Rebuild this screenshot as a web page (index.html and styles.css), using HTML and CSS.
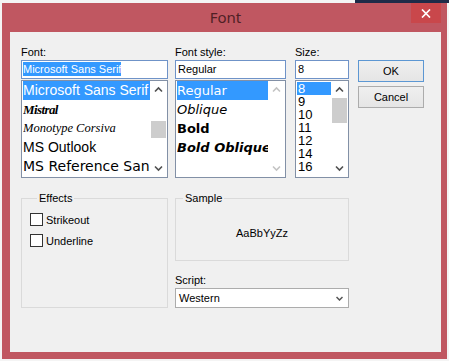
FILE: index.html
```html
<!DOCTYPE html>
<html lang="en">
<head>
<meta charset="utf-8">
<title>Font</title>
<link rel="stylesheet" href="styles.css">
</head>
<body>
<div class="desk-strip"></div>
<div class="window">
  <div class="titlebar">
    <span class="title">Font</span>
    <button class="close" aria-label="Close">
      <svg width="10" height="9" viewBox="0 0 10 9"><path d="M1 0.5 L9 8.5 M9 0.5 L1 8.5" stroke="#fff" stroke-width="1.7" fill="none"/></svg>
    </button>
  </div>
  <div class="client">
    <div class="top">
      <div class="col col-font">
        <div class="label">Font:</div>
        <div class="input"><span class="sel">Microsoft Sans Serif</span></div>
        <div class="list">
          <div class="items">
            <div class="row f-mss selected">Microsoft Sans Serif</div>
            <div class="row f-mistral">Mistral</div>
            <div class="row f-corsiva">Monotype Corsiva</div>
            <div class="row f-outlook">MS Outlook</div>
            <div class="row f-ref">MS Reference Sans Serif</div>
          </div>
          <div class="scrollbar">
            <div class="sb-btn"><svg width="17" height="17" viewBox="0 0 17 17"><path d="M5 10.5 L8.5 7 L12 10.5" class="chev"/></svg></div>
            <div class="sb-track"><div class="thumb thumb-font"></div></div>
            <div class="sb-btn"><svg width="17" height="17" viewBox="0 0 17 17"><path d="M5 6.5 L8.5 10 L12 6.5" class="chev"/></svg></div>
          </div>
        </div>
      </div>
      <div class="col col-style">
        <div class="label">Font style:</div>
        <div class="input"><span class="val">Regular</span></div>
        <div class="list">
          <div class="items style-items">
            <div class="row selected">Regular</div>
            <div class="row s-italic">Oblique</div>
            <div class="row s-bold">Bold</div>
            <div class="row s-bolditalic">Bold Oblique</div>
          </div>
          <div class="scrollbar disabled">
            <div class="sb-btn"><svg width="17" height="17" viewBox="0 0 17 17"><path d="M5 10.5 L8.5 7 L12 10.5" class="chev"/></svg></div>
            <div class="sb-track"></div>
            <div class="sb-btn"><svg width="17" height="17" viewBox="0 0 17 17"><path d="M5 6.5 L8.5 10 L12 6.5" class="chev"/></svg></div>
          </div>
        </div>
      </div>
      <div class="col col-size">
        <div class="label">Size:</div>
        <div class="input"><span class="val">8</span></div>
        <div class="list">
          <div class="items size-items">
            <div class="row selected">8</div>
            <div class="row">9</div>
            <div class="row">10</div>
            <div class="row">11</div>
            <div class="row">12</div>
            <div class="row">14</div>
            <div class="row">16</div>
          </div>
          <div class="scrollbar">
            <div class="sb-btn"><svg width="17" height="17" viewBox="0 0 17 17"><path d="M5 10.5 L8.5 7 L12 10.5" class="chev"/></svg></div>
            <div class="sb-track"><div class="thumb thumb-size"></div></div>
            <div class="sb-btn"><svg width="17" height="17" viewBox="0 0 17 17"><path d="M5 6.5 L8.5 10 L12 6.5" class="chev"/></svg></div>
          </div>
        </div>
      </div>
      <div class="buttons">
        <button class="btn default">OK</button>
        <button class="btn">Cancel</button>
      </div>
    </div>
    <div class="bottom">
      <div class="group effects" role="group">
        <div class="group-title">Effects</div>
        <label class="check"><span class="box"></span><span class="check-text">Strikeout</span></label>
        <label class="check"><span class="box"></span><span class="check-text">Underline</span></label>
      </div>
      <div class="right">
        <div class="group sample" role="group">
          <div class="group-title">Sample</div>
          <div class="sample-text">AaBbYyZz</div>
        </div>
        <div class="label script-label">Script:</div>
        <div class="select">
          <span>Western</span>
          <svg width="7" height="5" viewBox="0 0 7 5"><path d="M0.5 1 L3.5 4 L6.5 1" stroke="#555" stroke-width="1.5" fill="none"/></svg>
        </div>
      </div>
    </div>
  </div>
</div>
</body>
</html>
```

FILE: styles.css
```css
* { box-sizing: border-box; }

html, body {
  margin: 0;
}

body {
  width: 449px;
  height: 361px;
  padding: 3px 0 0 2px;
  background: #f4f4f4;
  font-family: "Liberation Sans", Arial, sans-serif;
  font-size: 11px;
  color: #000;
  position: relative;
  overflow: hidden;
}

.desk-strip {
  position: absolute;
  top: 0;
  left: 355px;
  width: 94px;
  height: 3px;
  background: #1e2b48;
}

.window {
  width: 445px;
  height: 356px;
  background: #c05761;
  display: flex;
  flex-direction: column;
  padding: 0 6px 7px 8px;
}

.titlebar {
  height: 29px;
  flex: none;
  display: grid;
  grid-template-columns: 1fr auto 1fr;
  align-items: start;
}

.title {
  grid-column: 2;
  margin-top: 4px;
  font-family: "Noto Sans", "Open Sans", sans-serif;
  font-size: 15px;
  line-height: 20px;
  color: #4f1f25;
}

.close {
  grid-column: 3;
  justify-self: end;
  width: 30px;
  height: 20px;
  border: 0;
  padding: 0;
  margin: 0;
  background: #c9474b;
  display: flex;
  align-items: center;
  justify-content: center;
}

.client {
  flex: 1;
  background: #f0f0f0;
  padding-top: 14px;
}

.top {
  display: flex;
  align-items: flex-start;
}

.col-font { margin-left: 11px; width: 147px; }
.col-style { margin-left: 7px; width: 111px; }
.col-size { margin-left: 9px; width: 54px; }

.label {
  height: 13px;
  line-height: 13px;
  margin-bottom: 1px;
  white-space: nowrap;
}

.input {
  height: 19px;
  border: 1px solid #6f93c8;
  background: #fff;
  padding: 1px 1px 0;
  line-height: 14px;
  white-space: nowrap;
  overflow: hidden;
}

.input .sel {
  display: inline-block;
  background: #3399ff;
  color: #fff;
  height: 14px;
}

.input .val {
  padding-left: 1px;
}

.list {
  margin-top: 1px;
  height: 98px;
  border: 1px solid #8290a6;
  background: #fff;
  display: flex;
}

.items {
  flex: 1;
  min-width: 0;
  overflow: hidden;
}

.row {
  margin-left: 1px;
  height: 19px;
  line-height: 19px;
  font-size: 14px;
  white-space: nowrap;
  overflow: hidden;
}

.row.selected {
  background: #3399ff;
  color: #fff;
}

.f-mistral {
  font-family: "Liberation Serif", serif;
  font-style: italic;
  font-weight: bold;
  font-size: 13px;
  letter-spacing: -0.6px;
}

.f-corsiva {
  font-family: "Liberation Serif", serif;
  font-style: italic;
  font-size: 12.5px;
}

.f-ref {
  font-family: "DejaVu Sans", sans-serif;
}

.style-items .row {
  font-family: "DejaVu Sans", sans-serif;
  font-size: 13px;
}

.s-italic { font-style: italic; }
.s-bold { font-weight: bold; }
.s-bolditalic { font-weight: bold; font-style: italic; }

.size-items {
  padding-top: 1px;
}

.size-items .row {
  height: 13px;
  line-height: 13px;
  font-size: 13px;
  padding-left: 1px;
}

.scrollbar {
  width: 17px;
  flex: none;
  display: flex;
  flex-direction: column;
}

.sb-btn {
  height: 17px;
  flex: none;
}

.sb-btn svg { display: block; }

.chev {
  fill: none;
  stroke: #505050;
  stroke-width: 1.6;
}

.scrollbar.disabled .chev {
  stroke: #c4c4c4;
}

.sb-track {
  flex: 1;
}

.thumb {
  margin-left: 1px;
  width: 15px;
  background: #cdcdcd;
}

.thumb-font { margin-top: 23px; height: 17px; }
.thumb-size { margin-top: 0; height: 25px; }

.buttons {
  margin-left: 9px;
  width: 66px;
  padding-top: 14px;
  display: flex;
  flex-direction: column;
  gap: 4px;
}

.btn {
  width: 66px;
  height: 22px;
  margin: 0;
  padding: 0;
  border: 1px solid #acacac;
  background: linear-gradient(#efefef, #e5e5e5);
  font-family: "Liberation Sans", Arial, sans-serif;
  font-size: 11px;
  color: #000;
}

.btn.default {
  border-color: #5c97d3;
}

.bottom {
  display: flex;
  align-items: flex-start;
  margin-top: 20px;
}

.group {
  border: 1px solid #dadada;
}

.group-title {
  width: fit-content;
  margin: -7px 0 0 7px;
  padding: 0 2px;
  line-height: 13px;
  height: 13px;
  background: #f0f0f0;
}

.effects {
  margin-left: 11px;
  width: 147px;
  height: 110px;
  padding-left: 8px;
}

.check {
  display: flex;
  align-items: flex-start;
  height: 13px;
  margin-top: 8px;
  gap: 3px;
}

.box {
  width: 13px;
  height: 13px;
  border: 1px solid #333;
  background: #fff;
}

.check-text {
  line-height: 13px;
  margin-top: 1px;
}

.right {
  margin-left: 7px;
  width: 174px;
}

.sample {
  height: 63px;
}

.sample-text {
  margin-top: 22px;
  text-align: center;
  line-height: 13px;
}

.script-label {
  margin-top: 13px;
}

.select {
  height: 20px;
  border: 1px solid #acacac;
  background: #fff;
  display: flex;
  align-items: center;
  justify-content: space-between;
  padding: 0 5px 0 3px;
  line-height: 18px;
}

.select svg { display: block; }
```
